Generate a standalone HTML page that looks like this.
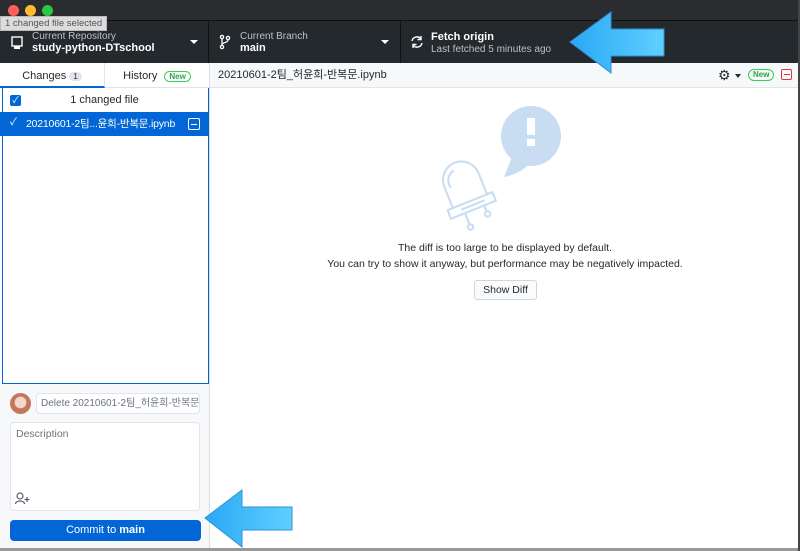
<!DOCTYPE html>
<html><head><meta charset="utf-8"><style>
*{box-sizing:border-box;margin:0;padding:0}
body{width:800px;height:551px;overflow:hidden;background:#fff;font-family:"Liberation Sans","Noto Sans CJK KR",sans-serif;position:relative}
.abs{position:absolute}
.title{left:0;top:0;width:800px;height:20px;background:#2b2c2f}
.dot{top:5px;width:11px;height:11px;border-radius:50%}
.tb{left:0;top:20px;width:800px;height:43px;background:#24292e;border-top:1px solid #111}
.sec{top:20px;height:43px;border-right:1px solid #111;color:#fff}
.sm{font-size:10px;color:#bcc0c5}
.bd{font-size:11px;font-weight:bold;color:#fff}
.tip{left:0;top:16px;background:#dcdcdc;color:#555;font-size:9.5px;padding:1px 4px;border:1px solid #bbb}
</style></head><body>
<div class="abs title"></div>
<div class="abs dot" style="left:8px;background:#ff5f57"></div>
<div class="abs dot" style="left:25px;background:#febc2e"></div>
<div class="abs dot" style="left:42px;background:#28c840"></div>
<div class="abs tb"></div>
<div class="abs sec" style="left:0;width:209px">
 <svg class="abs" style="left:11px;top:16px" width="12" height="14" viewBox="0 0 12 14"><rect x="1" y="1" width="10" height="9" fill="none" stroke="#fff" stroke-width="1.4"/><rect x="3" y="10" width="6" height="3" fill="#fff"/></svg>
 <div class="abs sm" style="left:32px;top:11px">Current Repository</div>
 <div class="abs bd" style="left:32px;top:22px">study-python-DTschool</div>
 <div class="abs" style="left:190px;top:20px;border:4px solid transparent;border-top:4px solid #fff"></div>
</div>
<div class="abs sec" style="left:209px;width:192px">
 <svg class="abs" style="left:10px;top:14px" width="12" height="16" viewBox="0 0 12 16"><circle cx="3" cy="3" r="1.6" fill="none" stroke="#fff" stroke-width="1.3"/><circle cx="3" cy="13" r="1.6" fill="none" stroke="#fff" stroke-width="1.3"/><circle cx="9" cy="4" r="1.6" fill="none" stroke="#fff" stroke-width="1.3"/><path d="M3 5V11M9 6C9 9 3 8 3 11" fill="none" stroke="#fff" stroke-width="1.3"/></svg>
 <div class="abs sm" style="left:31px;top:11px">Current Branch</div>
 <div class="abs bd" style="left:31px;top:22px">main</div>
 <div class="abs" style="left:172px;top:20px;border:4px solid transparent;border-top:4px solid #fff"></div>
</div>
<div class="abs" style="left:401px;top:20px;width:399px;height:43px;color:#fff">
 <svg class="abs" style="left:9px;top:15px" width="14" height="14" viewBox="0 0 14 14"><path d="M2 6A5 5 0 0 1 11 4M12 8A5 5 0 0 1 3 10" fill="none" stroke="#fff" stroke-width="1.4"/><path d="M11 1V4.5H7.5M3 13V9.5H6.5" fill="none" stroke="#fff" stroke-width="1.4"/></svg>
 <div class="abs bd" style="left:30px;top:11px">Fetch origin</div>
 <div class="abs sm" style="left:30px;top:24px">Last fetched 5 minutes ago</div>
</div>
<div class="abs tip">1 changed file selected</div>

<!-- left panel -->
<div class="abs" style="left:0;top:63px;width:210px;height:488px;background:#fff;border-right:1px solid #ddd"></div>
<div class="abs" style="left:0;top:63px;width:105px;height:25px;border-bottom:2px solid #0366d6;border-right:1px solid #e1e4e8;font-size:11px;color:#24292e;text-align:center;line-height:27px">Changes <span style="background:#e1e4e8;border-radius:8px;padding:0 4px;font-size:8px">1</span></div>
<div class="abs" style="left:105px;top:63px;width:104px;height:25px;border-bottom:1px solid #e1e4e8;font-size:11px;color:#24292e;text-align:center;line-height:26px">History <span style="border:1px solid #34d058;color:#28a745;border-radius:8px;padding:0 4px;font-size:8px;font-weight:bold;margin-left:4px">New</span></div>
<div class="abs" style="left:2px;top:88px;width:207px;height:296px;border:1px solid #0366d6;border-top:none"></div>
<div class="abs" style="left:10px;top:95px;width:11px;height:11px;background:#0366d6;border-radius:2px;color:#fff;font-size:9px;line-height:11px;text-align:center">✓</div>
<div class="abs" style="left:0;top:94px;width:209px;text-align:center;font-size:11px;color:#24292e;line-height:12px">1 changed file</div>
<div class="abs" style="left:0;top:112px;width:209px;height:24px;background:#0366d6;color:#fff;font-size:10.5px;line-height:24px;padding-left:26px;letter-spacing:-0.2px">20210601-2팀...윤희-반복문.ipynb</div>
<div class="abs" style="left:10px;top:117px;width:11px;height:11px;color:#fff;font-size:10px;line-height:11px">✓</div>
<div class="abs" style="left:188px;top:118px;width:12px;height:12px;border:1.3px solid #fff;border-radius:2px"><div style="margin:4.5px 2px;height:1.3px;background:#fff"></div></div>
<!-- commit area -->
<div class="abs" style="left:0;top:384px;width:209px;height:164px;background:#f6f8fa"></div>
<div class="abs" style="left:10px;top:393px;width:21px;height:21px;border-radius:50%;background:radial-gradient(circle at 50% 45%,#f3d6cc 0 35%,#c4775a 40%)"></div>
<div class="abs" style="left:36px;top:393px;width:164px;height:21px;background:#fff;border:1px solid #e1e4e8;border-radius:4px;font-size:10px;color:#6a737d;line-height:19px;padding-left:4px;white-space:nowrap;overflow:hidden">Delete 20210601-2팀_허윤희-반복문</div>
<div class="abs" style="left:10px;top:422px;width:190px;height:89px;background:#fff;border:1px solid #e1e4e8;border-radius:4px;font-size:10.5px;color:#6a737d;padding:5px 5px">Description</div>
<svg class="abs" style="left:15px;top:492px" width="16" height="12" viewBox="0 0 16 12"><circle cx="5" cy="4" r="3" fill="none" stroke="#586069" stroke-width="1.2"/><path d="M0.5 12C0.5 8 9.5 8 9.5 12M12 5V10M9.5 7.5H14.5" fill="none" stroke="#586069" stroke-width="1.2"/></svg>
<div class="abs" style="left:10px;top:520px;width:191px;height:21px;background:#0366d6;border-radius:4px;color:#fff;font-size:11px;text-align:center;line-height:21px">Commit to <b>main</b></div>

<!-- diff header -->
<div class="abs" style="left:210px;top:63px;width:590px;height:25px;background:#f6f8fa;border-bottom:1px solid #e1e4e8;font-size:11px;color:#24292e;line-height:24px;padding-left:8px">20210601-2팀_허윤희-반복문.ipynb</div>
<div class="abs" style="left:718px;top:67px;font-size:14px;color:#24292e">⚙</div>
<div class="abs" style="left:735px;top:74px;border:3px solid transparent;border-top:4px solid #24292e"></div>
<div class="abs" style="left:748px;top:69px;border:1px solid #34d058;color:#28a745;border-radius:8px;padding:0 4px;font-size:8px;font-weight:bold;line-height:10px">New</div>
<div class="abs" style="left:781px;top:69px;width:11px;height:11px;border:1.2px solid #d73a49;border-radius:2px"><div style="margin:3.5px 1.5px;height:1.2px;background:#d73a49"></div></div>

<!-- illustration -->
<svg class="abs" style="left:430px;top:100px" width="140" height="135" viewBox="430 100 140 135">
 <circle cx="531" cy="136" r="30" fill="#c8ddf2"/>
 <path d="M512 157 L504 177 C515 175 526 169 532 161Z" fill="#c8ddf2"/>
 <rect x="527" y="118" width="8" height="17" fill="#fff"/><rect x="527" y="139" width="8" height="7" fill="#fff"/>
 <g transform="translate(470 195) scale(1.15) rotate(-22) translate(-470 -195)" fill="none" stroke="#c8ddf2" stroke-width="1.8">
  <path d="M452 200V180A16 16 0 0 1 484 180V200"/>
  <path d="M457 183A10 10 0 0 1 465 170"/>
  <rect x="447" y="200" width="42" height="8"/>
  <path d="M458 204H480"/>
  <path d="M460 208V219M478 208V214"/>
  <circle cx="460" cy="221" r="2.3"/><circle cx="478" cy="216" r="2.3"/>
 </g>
</svg>
<div class="abs" style="left:210px;top:240px;width:590px;text-align:center;font-size:10.5px;color:#24292e;line-height:16px">The diff is too large to be displayed by default.<br>You can try to show it anyway, but performance may be negatively impacted.</div>
<div class="abs" style="left:474px;top:280px;width:63px;height:20px;border:1px solid #d1d5da;border-radius:3px;background:#fafbfc;font-size:10.5px;text-align:center;line-height:18px;color:#24292e">Show Diff</div>

<!-- window border -->
<div class="abs" style="left:0;top:548px;width:800px;height:3px;background:#999"></div>
<div class="abs" style="left:798px;top:0;width:2px;height:551px;background:#444"></div>

<!-- arrows -->
<svg class="abs" style="left:0;top:0" width="800" height="551">
 <defs><linearGradient id="g" x1="0" y1="0" x2="1" y2="0"><stop offset="0" stop-color="#2aa8f5"/><stop offset="1" stop-color="#5fd0ff"/></linearGradient></defs>
 <polygon points="570,42 611,12 611,29 664,29 664,56 611,56 611,73" fill="url(#g)" stroke="#2d8fd8" stroke-width="1"/>
 <polygon points="205,518 242,490 242,507 292,507 292,530 242,530 242,547" fill="url(#g)" stroke="#2d8fd8" stroke-width="1"/>
</svg>
</body></html>
